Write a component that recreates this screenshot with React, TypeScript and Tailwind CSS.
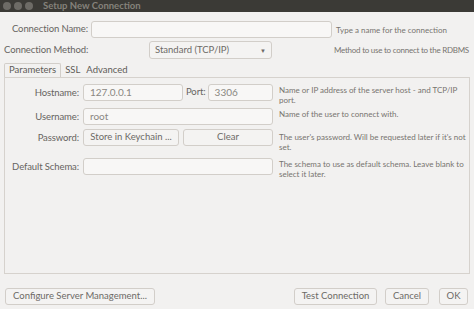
import React from "react";

const font = { fontFamily: 'Lato, "Liberation Sans", sans-serif' };

function Input({ value, className = "" }: { value?: string; className?: string }) {
  return (
    <div
      className={`h-[17px] shrink-0 whitespace-nowrap rounded-[3px] border border-[#d2cec9] bg-[#f8f7f6] px-[6px] text-[10px] leading-[15px] text-[#8a8782] ${className}`}
    >
      {value}
    </div>
  );
}

function Button({ label, className = "" }: { label: string; className?: string }) {
  return (
    <div
      className={`flex h-[17px] shrink-0 items-center justify-center whitespace-nowrap rounded-[3px] border border-[#d2cec9] bg-[#f4f3f2] text-[9.5px] text-[#6d6a66] ${className}`}
    >
      {label}
    </div>
  );
}

function Hint({ children, className = "" }: { children: React.ReactNode; className?: string }) {
  return (
    <div className={`whitespace-nowrap text-[8px] leading-[10px] text-[#77746f] ${className}`}>{children}</div>
  );
}

const label = "shrink-0 whitespace-nowrap text-[9.5px] tracking-[-0.1px] text-[#67645f]";

export default function App() {
  return (
    <div className="flex h-[309px] w-[474px] flex-col overflow-hidden bg-[#f2f1f0]" style={font}>
      {/* title bar */}
      <div className="flex h-[12px] items-center gap-[3px] bg-[#3b3a36] px-[3px]">
        <span className="h-[8px] w-[8px] rounded-full bg-[#6d6b66]" />
        <span className="h-[8px] w-[8px] rounded-full bg-[#6d6b66]" />
        <span className="h-[8px] w-[8px] rounded-full bg-[#6d6b66]" />
        <span className="ml-[7px] whitespace-nowrap text-[9.5px] font-bold leading-[12px] text-[#85827b]">
          Setup New Connection
        </span>
      </div>

      <div className="flex flex-1 flex-col px-[4px] pt-[9px]">
        <div className="flex h-[17px] items-center">
          <span className={`w-[84px] text-right ${label}`}>Connection Name:</span>
          <Input className="ml-[3px] w-[241px]" />
          <span className="ml-[4px]">
            <Hint>Type a name for the connection</Hint>
          </span>
        </div>

        <div className="mt-[3px] flex h-[18px] items-center">
          <span className={`w-[145px] ${label}`}>Connection Method:</span>
          <div className="flex h-[18px] w-[123px] shrink-0 items-center justify-between rounded-[3px] border border-[#d2cec9] bg-[#f4f3f2] px-[5px] text-[9.5px] text-[#6d6a66]">
            <span className="whitespace-nowrap">Standard (TCP/IP)</span>
            <span className="text-[6px]">▼</span>
          </div>
          <span className="ml-[62px]">
            <Hint className="tracking-[-0.25px]">Method to use to connect to the RDBMS</Hint>
          </span>
        </div>

        {/* tabs */}
        <div className="mt-[4px] flex h-[14px] items-end text-[9.5px] text-[#5e5b57]">
          <div className="flex h-[14px] items-center whitespace-nowrap rounded-t-[2px] border border-b-0 border-[#d2cec9] bg-[#f2f1f0] px-[4px]">
            Parameters
          </div>
          <div className="px-[4px] leading-[14px]">SSL</div>
          <div className="px-[2px] leading-[14px]">Advanced</div>
        </div>

        <div className="flex h-[197px] flex-col border border-[#d6d2cd] bg-[#f2f1f0] pt-[6px]">
          <div className="flex h-[24px] items-start">
            <span className={`mt-[2px] w-[74px] text-right ${label}`}>Hostname:</span>
            <div className="ml-[4px] flex w-[190px] shrink-0 items-center">
              <Input value="127.0.0.1" className="w-[100px]" />
              <span className={`ml-[3px] mr-[2px] ${label}`}>Port:</span>
              <Input value="3306" className="flex-1" />
            </div>
            <div className="ml-[6px] pt-[1px]">
              <Hint>
                Name or IP address of the server host - and TCP/IP
                <br />
                port.
              </Hint>
            </div>
          </div>

          <div className="flex h-[21px] items-start">
            <span className={`mt-[2px] w-[74px] text-right ${label}`}>Username:</span>
            <Input value="root" className="ml-[4px] w-[190px]" />
            <div className="ml-[6px] pt-[1px]">
              <Hint>Name of the user to connect with.</Hint>
            </div>
          </div>

          <div className="flex h-[29px] items-start">
            <span className={`mt-[2px] w-[74px] text-right ${label}`}>Password:</span>
            <div className="ml-[4px] flex w-[190px] shrink-0 gap-[4px]">
              <Button label="Store in Keychain ..." className="w-[96px]" />
              <Button label="Clear" className="flex-1" />
            </div>
            <div className="ml-[6px] pt-[3px]">
              <Hint>
                The user's password. Will be requested later if it's not
                <br />
                set.
              </Hint>
            </div>
          </div>

          <div className="flex items-start">
            <span className={`mt-[2px] w-[74px] text-right ${label}`}>Default Schema:</span>
            <Input className="ml-[4px] w-[190px]" />
            <div className="ml-[6px] pt-[1px]">
              <Hint>
                The schema to use as default schema. Leave blank to
                <br />
                select it later.
              </Hint>
            </div>
          </div>
        </div>

        <div className="mt-[14px] flex items-center">
          <Button label="Configure Server Management..." className="ml-[1px] w-[150px]" />
          <div className="flex-1" />
          <Button label="Test Connection" className="w-[83px]" />
          <Button label="Cancel" className="ml-[8px] w-[44px]" />
          <Button label="OK" className="ml-[10px] w-[29px]" />
          <div className="w-[2px]" />
        </div>
      </div>
    </div>
  );
}
